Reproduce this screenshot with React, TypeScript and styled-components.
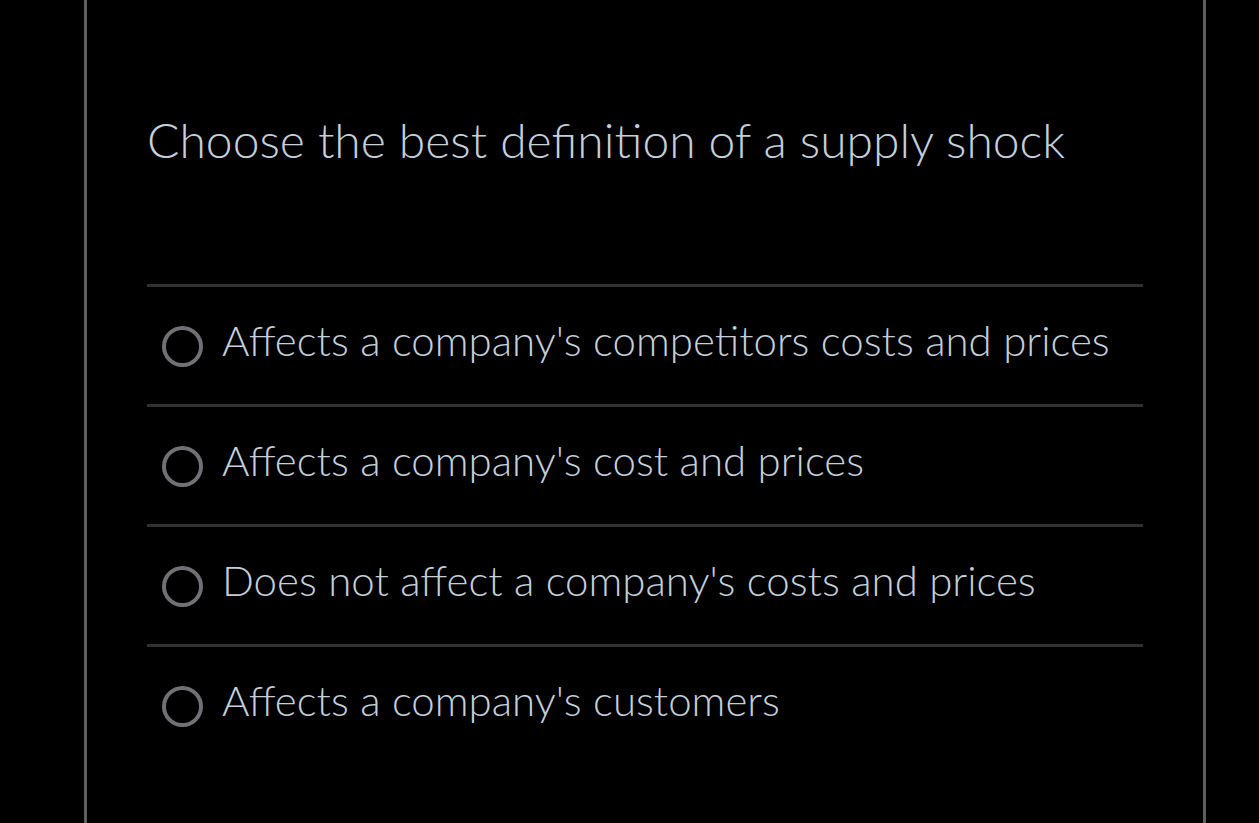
import React from 'react';
import styled, { createGlobalStyle } from 'styled-components';

const GlobalStyle = createGlobalStyle`
    html, body {
        margin: 0;
        padding: 0;
        background: #000;
    }
    body {
        font-family: Lato, 'Open Sans', sans-serif;
    }
`;

const options = [
    "Affects a company's competitors costs and prices",
    "Affects a company's cost and prices",
    "Does not affect a company's costs and prices",
    "Affects a company's customers"
];

const App: React.FC = () => {
    return (
        <>
            <GlobalStyle />
            <StyledPanel>
                <StyledQuestion>
                    Choose the best definition of a supply shock
                </StyledQuestion>
                <StyledList>
                    {options.map(text => (
                        <StyledOption key={text}>
                            <StyledRadio type="radio" name="answer" />
                            <StyledLabel>{text}</StyledLabel>
                        </StyledOption>
                    ))}
                </StyledList>
            </StyledPanel>
        </>
    );
};

const StyledPanel = styled.div`
    box-sizing: border-box;
    margin-left: 84px;
    width: 1122px;
    min-height: 100vh;
    border-left: 3px solid #5e5e5e;
    border-right: 3px solid #5e5e5e;
    padding: 111px 60px 0 60px;
`;

const StyledQuestion = styled.h1`
    margin: 0 0 115px 0;
    font-size: 48px;
    font-weight: 300;
    line-height: 1.2;
    color: #c4cfda;
    white-space: nowrap;
`;

const StyledList = styled.div`
    display: flex;
    flex-direction: column;
`;

const StyledOption = styled.label`
    display: flex;
    align-items: flex-start;
    height: 120px;
    box-sizing: border-box;
    border-top: 3px solid #313131;
    padding: 28px 0 0 15px;
    gap: 19px;
`;

const StyledRadio = styled.input`
    appearance: none;
    margin: 11px 0 0 0;
    width: 41px;
    height: 41px;
    box-sizing: border-box;
    border: 4px solid #707075;
    border-radius: 50%;
    background: transparent;
    flex: 0 0 auto;
`;

const StyledLabel = styled.span`
    font-size: 42px;
    font-weight: 300;
    line-height: 1.2;
    color: #c4cfda;
    white-space: nowrap;
`;

export default App;
